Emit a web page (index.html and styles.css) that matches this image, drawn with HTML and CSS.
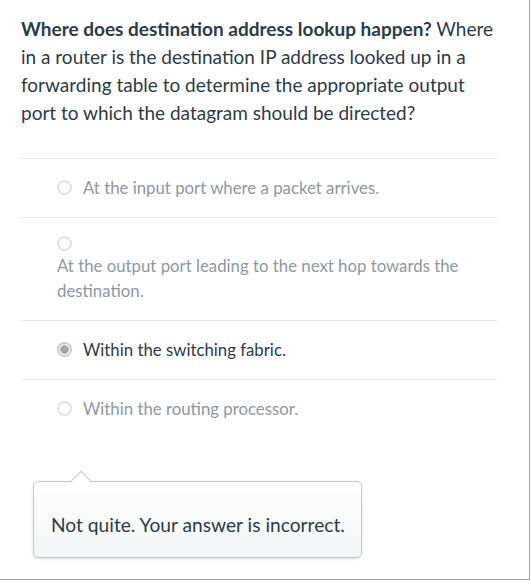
FILE: index.html
```html
<!DOCTYPE html>
<html>
<head>
<meta charset="utf-8">
<link rel="stylesheet" href="styles.css">
</head>
<body>
<div class="frame">
  <div class="question">
    <p class="q-text"><strong>Where does destination address lookup happen?</strong> Where in a router is the destination IP address looked up in a forwarding table to determine the appropriate output port to which the datagram should be directed?</p>
  </div>
  <ul class="answers">
    <li class="answer">
      <span class="radio-wrap"><span class="radio"></span></span>
      <span class="label">At the input port where a packet arrives.</span>
    </li>
    <li class="answer">
      <span class="radio-wrap"><span class="radio"></span></span>
      <span class="label">At the output port leading to the next hop towards the destination.</span>
    </li>
    <li class="answer selected">
      <span class="radio-wrap"><span class="radio checked"></span></span>
      <span class="label">Within the switching fabric.</span>
    </li>
    <li class="answer">
      <span class="radio-wrap"><span class="radio"></span></span>
      <span class="label">Within the routing processor.</span>
    </li>
  </ul>
  <div class="feedback">
    <span class="arrow"></span>
    <p class="feedback-text">Not quite. Your answer is incorrect.</p>
  </div>
</div>
</body>
</html>
```
FILE: styles.css
```css
html, body {
  margin: 0;
  padding: 0;
  background: #ffffff;
}

.frame {
  box-sizing: border-box;
  width: 530px;
  height: 580px;
  border-right: 1px solid #a3a3a3;
  border-bottom: 1px solid #a3a3a3;
  font-family: Lato, "Open Sans", sans-serif;
  color: #2d3b45;
  overflow: hidden;
}

.question {
  padding: 15px 32px 0 21px;
}

.q-text {
  margin: 0;
  font-size: 19px;
  line-height: 28px;
}

.q-text strong {
  font-weight: 700;
}

.answers {
  list-style: none;
  margin: 31px 32px 0 21px;
  padding: 0;
  border-top: 1px solid #e6e8ea;
}

.answer {
  display: flex;
  flex-wrap: wrap;
  align-items: center;
  padding: 16px 20px 17px 36px;
  border-bottom: 1px solid #e6e8ea;
  font-size: 16.8px;
  line-height: 25px;
  color: #8e989f;
}

.answer:last-child {
  border-bottom: none;
}

.answer.selected {
  color: #2d3b45;
}

.radio-wrap {
  display: flex;
  align-items: center;
  height: 19px;
  margin-right: 11px;
}

.radio {
  box-sizing: border-box;
  display: block;
  width: 15px;
  height: 15px;
  border-radius: 50%;
  border: 2px solid #dfe2e5;
  background: #ffffff;
}

.radio.checked {
  border-color: #c9ccd0;
  background: radial-gradient(circle, #a2a5ab 0, #a2a5ab 4px, #ffffff 4.6px);
}

.label {
  flex: 0 1 auto;
}

.feedback {
  position: relative;
  box-sizing: border-box;
  width: 329px;
  margin: 43px 0 0 33px;
  padding: 29px 8px 18px 17px;
  border: 1px solid #c3c9ce;
  border-radius: 5px;
  background: linear-gradient(#ffffff, #f4f5f6);
  box-shadow: 0 1px 3px rgba(0, 0, 0, 0.12);
}

.arrow {
  position: absolute;
  top: -8px;
  left: 39px;
  width: 15px;
  height: 15px;
  background: #ffffff;
  border-left: 1px solid #c3c9ce;
  border-top: 1px solid #c3c9ce;
  transform: rotate(45deg);
}

.feedback-text {
  margin: 0;
  font-size: 19.2px;
  line-height: 28px;
  color: #2d3b45;
  white-space: nowrap;
}
```
